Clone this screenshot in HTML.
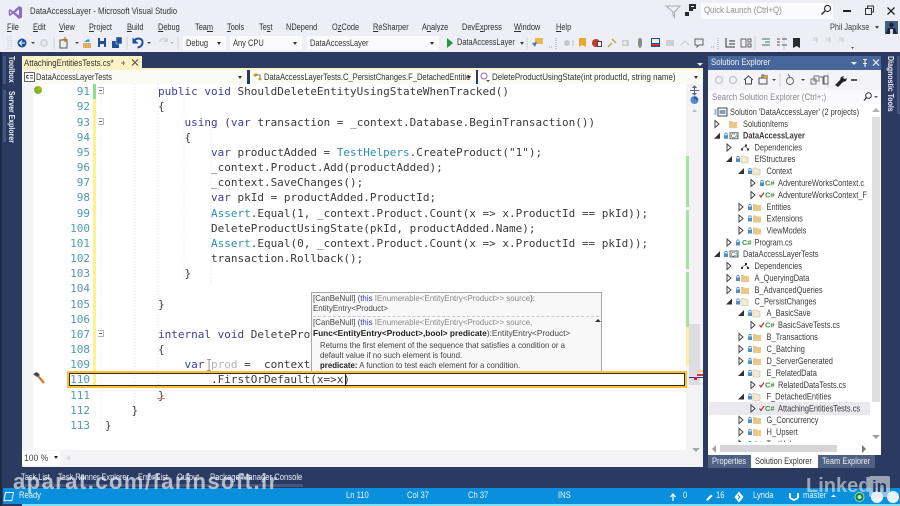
<!DOCTYPE html>
<html><head><meta charset="utf-8"><style>
html,body{margin:0;padding:0;background:#2a3a61}
#p{position:relative;width:900px;height:506px;overflow:hidden;background:#2a3a61;font-family:"Liberation Sans",sans-serif;color:#333;filter:blur(.35px)}
#p div,#p svg{position:absolute}
.x{display:inline-block;transform:scaleX(.83);transform-origin:0 0;white-space:nowrap}
.m{top:22px;font-size:9px;line-height:11px;color:#2e2e33;white-space:nowrap;transform:scaleX(.82);transform-origin:0 0}
.m u{text-decoration:underline}
.cb{background:#fbfbfd;height:14px;top:36px;font-size:9px;line-height:14px;color:#333;padding-left:3px;box-sizing:border-box;white-space:nowrap}
.cb:after,.nb:after{content:"";position:absolute;right:5px;top:6px;border:2.5px solid transparent;border-top:3px solid #333;border-bottom:0}
.nb{background:#fbfbf6;height:14px;top:70px;font-size:9px;line-height:14px;color:#333;box-sizing:border-box;white-space:nowrap;overflow:hidden}
.c{left:105px;font:11px/15px "DejaVu Sans Mono",monospace;color:#3a3a3a;white-space:pre;height:15px}
.c b{font-weight:normal;color:#3e3e9e}
.c i{font-style:normal;color:#2b91af}
.c s{text-decoration:none;color:#b5b5b5}
.n{left:58px;width:32px;text-align:right;font:11px/15px "DejaVu Sans Mono",monospace;color:#4f9bb0;height:15px}
.t text{font:9px "Liberation Sans",sans-serif;fill:#3c3c3c}
.t>text{transform-box:fill-box;transform-origin:0 0;transform:scaleX(.825)}
.tp{line-height:10px;color:#444;white-space:nowrap}
.w{color:#eef1f6;font-size:9px;line-height:11px;white-space:nowrap;transform:scaleX(.82);transform-origin:0 0}
.st{top:490px;color:#eef7fd;font-size:9.5px;line-height:12px;white-space:nowrap;transform:scaleX(.8);transform-origin:0 0}
</style></head><body><div id="p">

<!-- chrome top -->
<div style="left:0;top:0;width:900px;height:52px;background:#eeeff6"></div>
<svg style="left:8px;top:5px" width="15" height="15" viewBox="0 0 15 15"><path d="M11 1l3 1.5v10L11 14 5 8.500 2 11 .8 10V5l1.200-1 3 2.500z" fill="#8a6cc0"/><path d="M11 4.500v6L7 7.500z" fill="#eeeff6"/><path d="M2 6v3l1.500-1.500z" fill="#eeeff6"/></svg>
<div style="left:30px;top:6px;font-size:9.5px;line-height:12px;color:#333;white-space:nowrap;transform:scaleX(.82);transform-origin:0 0">DataAccessLayer - Microsoft Visual Studio</div>
<svg style="left:665px;top:3px" width="22" height="17" viewBox="0 0 22 17"><path d="M1 3h14l-5.500 6v5.500L8 12V9z" fill="none" stroke="#a9a9ae"/></svg>
<svg style="left:684px;top:3px" width="14" height="14" viewBox="0 0 14 14"><path d="M5 1h7v5H9v2H5zM1 9h4v4H1z" fill="#2b2b30"/><path d="M7 3h3v1H7z" fill="#eee"/></svg>
<div style="left:701px;top:3px;width:132px;height:16px;background:#fbfbfe;font-size:9.5px;line-height:16px;color:#8f8f96;padding-left:3px;box-sizing:border-box"><span class="x" style="transform:scaleX(.82)">Quick Launch (Ctrl+Q)</span></div>
<svg style="left:820px;top:4px" width="12" height="12" viewBox="0 0 12 12"><circle cx="7.500" cy="4.500" r="3" fill="none" stroke="#333" stroke-width="1.200"/><path d="M5 7l-3.500 3.500" stroke="#333" stroke-width="1.500"/></svg>
<div style="left:843px;top:10px;width:8px;height:2px;background:#222"></div>
<svg style="left:864px;top:5px" width="11" height="11" viewBox="0 0 11 11"><path d="M3.500 3V1h6v6H7.500M1.500 3.500h6v6h-6z" fill="none" stroke="#333"/></svg>
<svg style="left:886px;top:6px" width="10" height="10" viewBox="0 0 10 10"><path d="M1.500 1.500l7 7M8.500 1.500l-7 7" stroke="#222" stroke-width="1.300"/></svg>

<div class="m" style="left:7px"><u>F</u>ile</div>
<div class="m" style="left:33px"><u>E</u>dit</div>
<div class="m" style="left:59px"><u>V</u>iew</div>
<div class="m" style="left:89px"><u>P</u>roject</div>
<div class="m" style="left:127px"><u>B</u>uild</div>
<div class="m" style="left:158px"><u>D</u>ebug</div>
<div class="m" style="left:195px">Tea<u>m</u></div>
<div class="m" style="left:227px"><u>T</u>ools</div>
<div class="m" style="left:259px">Te<u>s</u>t</div>
<div class="m" style="left:286px">NDepend</div>
<div class="m" style="left:332px">O<u>z</u>Code</div>
<div class="m" style="left:373px"><u>R</u>eSharper</div>
<div class="m" style="left:422px">A<u>n</u>alyze</div>
<div class="m" style="left:462px">DevE<u>x</u>press</div>
<div class="m" style="left:514px"><u>W</u>indow</div>
<div class="m" style="left:556px"><u>H</u>elp</div>
<div class="m" style="left:830px;color:#444">Phil Japikse</div>
<div style="left:875px;top:26px;border:2.5px solid transparent;border-top:3px solid #444;border-bottom:0"></div>
<div style="left:885px;top:21px;width:13px;height:13px;background:#3d5f8a"></div>
<svg style="left:885px;top:21px" width="13" height="13" viewBox="0 0 13 13"><circle cx="6.500" cy="4" r="2.500" fill="#1e2b3c"/><path d="M1 13l2-6h7l2 6z" fill="#1b2430"/><path d="M5 8h3v5H5z" fill="#c9d6e6"/></svg>

<!-- toolbar -->
<svg style="left:0;top:34px" width="630" height="18" viewBox="0 0 630 18">
<path d="M8 2v14M11 2v14" stroke="#c8c8d0" stroke-dasharray="1 1"/>
<circle cx="22" cy="9" r="4.500" fill="#1e4f99"/><path d="M25 9h-5M22 6.500L19.500 9l2.500 2.500" stroke="#fff" fill="none"/>
<path d="M31 8h4l-2 2z" fill="#444"/>
<circle cx="44" cy="9" r="4" fill="#d5d5da"/><circle cx="44" cy="9" r="2" fill="#eeeff6"/>
<path d="M54 3v12" stroke="#cfcfd8"/>
<path d="M60 6h7v8h-7z" fill="#eee" stroke="#555"/><path d="M65 3v5M62.500 5.500h5" stroke="#a9781c" stroke-width="1.200"/>
<path d="M75 8h4l-2 2z" fill="#444"/>
<path d="M83 9h8v5h-8z" fill="#e0b060"/><path d="M84 8l4-3 2 1-1 2z" fill="#39a0d8"/>
<path d="M98 4h8v9h-8z" fill="#1e4f99"/><path d="M100 4h4v3h-4zM100 10h4v3h-4z" fill="#eef"/>
<path d="M112 7h7v7h-7z" fill="#1e4f99"/><path d="M116 3h6v7h-6z" fill="#1e4f99" stroke="#eeeff6" stroke-width=".5"/>
<path d="M127 3v12" stroke="#cfcfd8"/>
<path d="M134 6.500c4-3.500 9-2 8.500 2.500-.3 3-3 4.500-5 4.500" fill="none" stroke="#1e4f99" stroke-width="2"/><path d="M132.500 3.500v6h6z" fill="#1e4f99"/>
<path d="M147 8h4l-2 2z" fill="#444"/>
<path d="M167 6c-3-3-7-1-7 2" fill="none" stroke="#d4d4da" stroke-width="1.600"/><path d="M168 3v5h-5z" fill="#d4d4da"/>
<path d="M170 8h4l-2 2z" fill="#bbb"/>
<path d="M178 3v12" stroke="#cfcfd8"/>
<path d="M447 4l6 5-6 5z" fill="#1f9b3f"/>
<path d="M527 3v13" stroke="#cfcfd8"/>
</svg>
<div class="cb" style="left:183px;width:43px"><span class="x">Debug</span></div>
<div class="cb" style="left:230px;width:72px"><span class="x">Any CPU</span></div>
<div class="cb" style="left:307px;width:132px"><span class="x">DataAccessLayer</span></div>
<div class="m" style="left:457px;top:37px;color:#333">DataAccessLayer</div>
<div style="left:520px;top:42px;border:2.5px solid transparent;border-top:3px solid #444;border-bottom:0"></div>
<svg style="left:530px;top:34px" width="290" height="18" viewBox="530 34 290 18">
<path d="M535 38h8v6h-8z" fill="#e8b84a"/><path d="M532 43l5-1-2 5z" fill="#3f7fbf"/>
<path d="M549 47h3M556 38v11" stroke="#a0a0a8" stroke-dasharray="1 1"/>
<circle cx="567" cy="43" r="3" fill="#c8c8cc"/><path d="M572 40h2v6h-2z" fill="#d8d8dc"/>
<path d="M579 38h7v9l-4-2-3 2z" fill="#e8a830"/>
<circle cx="596" cy="43" r="4" fill="#c0392b"/><path d="M597 41h5v6h-5z" fill="#444"/><path d="M598 42h3v4h-3z" fill="#eee"/>
<path d="M608 47l4-4M612 39l4 4" stroke="#c9a24a" stroke-width="1.500"/>
<path d="M622 40h7v6h-7z" fill="#ccc"/><circle cx="625" cy="43" r="1.800" fill="#eee"/>
<path d="M640 38c-2 0-2 2-2 5s1 5 2 5 2-2 2-5 0-5-2-5z" fill="#888"/>
<path d="M651 38h9v9h-9z" fill="#1e4f99"/><path d="M652 39h7v4h-7z" fill="#eee"/><path d="M652 44h7v2h-7z" fill="#c33"/>
<path d="M666 40h8v6h-8z" fill="#d0d0d4"/>
<path d="M681 45l4-4 4 4" stroke="#ccc" fill="none"/>
<path d="M695 39h8v6h-4l-2 2v-2h-2z" fill="none" stroke="#666"/>
<path d="M711 47h3M718 38v11" stroke="#a0a0a8" stroke-dasharray="1 1"/>
<path d="M726 38v9h9M729 41h6M729 44h6" stroke="#333" fill="none"/>
<path d="M741 39h5v8h-5zM748 39h3v3h-3zM748 44h3v3h-3z" fill="none" stroke="#666"/>
<path d="M755 36v14M784 36v14" stroke="#cfcfd8"/>
<path d="M762 39h8M765 42h5M762 45h8" stroke="#3f7a6a"/>
<path d="M777 39h3M777 42h3M777 45h3M782 39h5M782 45h5" stroke="#555"/>
</svg>
<svg style="left:792px;top:37px" width="9" height="12" viewBox="0 0 9 12"><path d="M1 1h7v10L4.500 9 1 11z" fill="#2a2a2e"/></svg>
<svg style="left:810px;top:36px" width="50" height="14" viewBox="0 0 50 14"><path d="M3 2h4v5M3 4h4M16 2h4v5M16 4h4M29 2h4v5M29 4h4" stroke="#ccc" fill="none"/><path d="M41 11h3l-1.500 2z" fill="#555"/></svg>

<!-- left rail -->
<div style="left:0;top:52px;width:2px;height:454px;background:#1c2a49"></div>
<div class="w" style="left:0;top:56px;transform-origin:0 0;transform:translate(17px,0) rotate(90deg) scaleX(.82);font-weight:bold;font-size:8.5px">Toolbox</div>
<div class="w" style="left:0;top:91px;transform-origin:0 0;transform:translate(17px,0) rotate(90deg) scaleX(.82);font-weight:bold;font-size:8.5px">Server Explorer</div>
<div style="left:3px;top:56px;width:3px;height:28px;background:#44557b"></div>
<div style="left:3px;top:90px;width:3px;height:52px;background:#44557b"></div>

<!-- tab strip -->
<div style="left:22px;top:68px;width:681px;height:2px;background:#fdf1c6"></div>
<div style="left:22px;top:56px;width:120px;height:14px;background:#fdf1c6;font-size:9px;line-height:14px;color:#333;padding-left:2px;box-sizing:border-box;white-space:nowrap"><span class="x" style="transform:scaleX(.87)">AttachingEntitiesTests.cs*</span></div>
<svg style="left:120px;top:58px" width="20" height="10" viewBox="0 0 20 10"><path d="M1 5h4M3.500 3v4" stroke="#7b7b60"/><path d="M12 1.500l6 6M18 1.500l-6 6" stroke="#5a5a40" stroke-width="1.200"/></svg>
<svg style="left:696px;top:60px" width="8" height="6" viewBox="0 0 8 6"><path d="M0 1h8M1 3h6L4 6z" fill="#dfe4ee"/></svg>

<!-- nav bar -->
<div class="nb" style="left:22px;width:225px;padding-left:14px"><span class="x">DataAccessLayerTests</span></div>
<svg style="left:24px;top:72px" width="11" height="10" viewBox="0 0 11 10"><path d="M.5.500h10v9H.5z" fill="#fff" stroke="#666"/><path d="M4.500 3.500c-2-1-3 2.500 0 3" fill="none" stroke="#333"/><path d="M6 3.500h3M6 6h3" stroke="#555"/></svg>
<div class="nb" style="left:250px;width:226px;padding-left:14px"><span class="x" style="transform:scaleX(.84)">DataAccessLayerTests.C_PersistChanges.F_DetachedEntitie</span></div>
<svg style="left:252px;top:72px" width="11" height="10" viewBox="0 0 11 10"><path d="M1 3l3-2 2 2-3 2zM6 7l2-1.500L10 7l-2 1.500z" fill="#d4962f"/><path d="M4 3h4v3" fill="none" stroke="#777"/></svg>
<div class="nb" style="left:478px;width:225px;padding-left:14px"><span class="x" style="transform:scaleX(.88)">DeleteProductUsingState(int productId, string name)</span></div>
<svg style="left:479px;top:72px" width="12" height="10" viewBox="0 0 12 10"><circle cx="5" cy="4" r="3" fill="none" stroke="#8d6bb0"/><path d="M7 8h4l-2 2z" fill="#444"/></svg>

<!-- editor -->
<div style="left:22px;top:84px;width:681px;height:383px;background:#fff"></div>
<div style="left:22px;top:84px;width:11px;height:366px;background:#f4f4f6"></div>
<div style="left:686px;top:84px;width:17px;height:383px;background:#f3f3f6"></div>
<div style="left:22px;top:450px;width:664px;height:17px;background:#f4f4f6"></div>
<div style="left:22px;top:451px;width:38px;height:14px;background:#fff;font-size:9px;line-height:14px;color:#444;padding-left:2px;box-sizing:border-box"><span class="x" style="transform:scaleX(.95)">100 %</span></div>
<div style="left:54px;top:456px;border:2.5px solid transparent;border-top:3px solid #222;border-bottom:0"></div>
<div style="left:66px;top:455px;border:3px solid transparent;border-right:4px solid #dcdce0;border-left:0"></div>
<svg style="left:688px;top:84px" width="15" height="34" viewBox="0 0 15 34"><path d="M6.500 2v9M2 6.500h9M6.500 2l-1.500 1.500h3zM6.500 11L5 9.500h3z" stroke="#5a6b80"/><circle cx="6.500" cy="16" r="4" fill="#4d8ac9"/><path d="M6 14a2.500 2.500 0 0 1 3 2" stroke="#17345c" fill="none"/><path d="M4 28l2.500-3 2.500 3z" fill="#bdbdc4"/></svg>
<div style="left:689px;top:324px;width:11px;height:61px;background:#dcdce2"></div>
<div style="left:686px;top:156px;width:3px;height:51px;background:#a5e2a0"></div>
<div style="left:686px;top:210px;width:3px;height:59px;background:#a5e2a0"></div>
<div style="left:686px;top:272px;width:3px;height:55px;background:#a5e2a0"></div>
<div style="left:686px;top:327px;width:3px;height:39px;background:#fbeea0"></div>
<div style="left:697px;top:370px;width:6px;height:2px;background:#f0d78c"></div>
<div style="left:689px;top:377px;width:14px;height:1px;background:#2c2c9a"></div>
<div style="left:697px;top:374px;width:6px;height:2px;background:#d33"></div>
<div style="left:694px;top:377px;width:3px;height:3px;background:#d22"></div>
<div style="top:448px;border:4px solid transparent;border-top:4px solid #a8a8b0;border-bottom:0;left:692px"></div>

<!-- change margin -->
<div style="left:93px;top:84px;width:3px;height:15px;background:#8de08a"></div>
<div style="left:93px;top:99px;width:3px;height:287px;background:#fdf28e"></div>
<svg style="left:98px;top:84px" width="170" height="350" viewBox="98 84 170 350">
<path d="M101 91v340M135 84v340M158 84v320M184 84v200M211 130v155" stroke="#e4e4e4" stroke-dasharray="1 2" fill="none"/>
<path d="M97.500 87.500h6v6h-6zM97.500 118.500h6v6h-6zM97.500 330.500h6v6h-6z" fill="#fff" stroke="#b5b5b5"/>
<path d="M99 90.500h3M99 121.500h3M99 333.500h3" stroke="#666"/>
</svg>
<svg style="left:32px;top:84px" width="14" height="14" viewBox="0 0 14 14"><circle cx="6" cy="6" r="4" fill="#7ab82e"/><path d="M6 2a4 4 0 0 1 4 4H6z" fill="#d8a520"/></svg>
<svg style="left:32px;top:371px" width="14" height="14" viewBox="0 0 14 14"><path d="M1 3l4-2 3 3-3 2z" fill="#445"/><path d="M6 5l6 7" stroke="#d2732a" stroke-width="2.200"/></svg>

<!-- line numbers -->
<div class="n" style="top:84px">91</div><div class="n" style="top:99px">92</div><div class="n" style="top:114.500px">93</div><div class="n" style="top:129.500px">94</div><div class="n" style="top:144.500px">95</div><div class="n" style="top:160px">96</div><div class="n" style="top:175px">97</div><div class="n" style="top:190px">98</div><div class="n" style="top:205.500px">99</div><div class="n" style="top:220.500px">100</div><div class="n" style="top:235.500px">101</div><div class="n" style="top:251px">102</div><div class="n" style="top:266px">103</div><div class="n" style="top:281px">104</div><div class="n" style="top:296.500px">105</div><div class="n" style="top:311.500px">106</div><div class="n" style="top:326.500px">107</div><div class="n" style="top:342px">108</div><div class="n" style="top:357px">109</div><div class="n" style="top:372px">110</div><div class="n" style="top:387.500px">111</div><div class="n" style="top:402.500px">112</div><div class="n" style="top:417.500px">113</div>

<!-- code -->
<div class="c" style="top:84px">        <b>public void</b> ShouldDeleteEntityUsingStateWhenTracked()</div>
<div class="c" style="top:99px">        {</div>
<div class="c" style="top:114.500px">            <b>using</b> (<b>var</b> transaction = _context.Database.BeginTransaction())</div>
<div class="c" style="top:129.500px">            {</div>
<div class="c" style="top:144.500px">                <b>var</b> productAdded = <i>TestHelpers</i>.CreateProduct("1");</div>
<div class="c" style="top:160px">                _context.Product.Add(productAdded);</div>
<div class="c" style="top:175px">                _context.SaveChanges();</div>
<div class="c" style="top:190px">                <b>var</b> pkId = productAdded.ProductId;</div>
<div class="c" style="top:205.500px">                <i>Assert</i>.Equal(1, _context.Product.Count(x =&gt; x.ProductId == pkId));</div>
<div class="c" style="top:220.500px">                DeleteProductUsingState(pkId, productAdded.Name);</div>
<div class="c" style="top:235.500px">                <i>Assert</i>.Equal(0, _context.Product.Count(x =&gt; x.ProductId == pkId));</div>
<div class="c" style="top:251px">                transaction.Rollback();</div>
<div class="c" style="top:266px">            }</div>
<div class="c" style="top:296.500px">        }</div>
<div class="c" style="top:326.500px">        <b>internal void</b> DeletePro</div>
<div class="c" style="top:342px">        {</div>
<div class="c" style="top:357px">            <b>var</b> <s>prod</s> =  context</div>
<div class="c" style="top:387.500px">        }</div>
<div class="c" style="top:402.500px">    }</div>
<div class="c" style="top:417.500px">}</div>
<svg style="left:206px;top:359px" width="6" height="12" viewBox="0 0 6 12"><path d="M1 .5h4M1 11.500h4M3 .5v11" stroke="#999"/></svg>
<div style="left:157px;top:398px;width:8px;height:1px;background:#d9807a"></div>

<!-- line 110 -->
<div style="left:67px;top:371px;width:620px;height:17px;box-sizing:border-box;border:2px solid #f7bf3c;background:transparent"></div>
<div style="left:69px;top:373px;width:616px;height:13px;box-sizing:border-box;border:1px solid #3b2f12"></div>
<div class="c" style="top:372px">                .FirstOrDefault(x=&gt;x)</div>
<div style="left:344.500px;top:374px;width:1px;height:12px;background:#222"></div>

<!-- tooltip -->
<div style="left:311px;top:292px;width:291px;height:79px;background:#f8f8f8;border:1px solid #a8a8a8;box-sizing:border-box;border-bottom:0"></div>
<div style="left:313px;top:316px;width:286px;height:0;border-top:1px dashed #c8c8c8"></div>
<div class="tp" style="left:313px;top:294px;font-size:7.95px"><span style="color:#444">[CanBeNull]</span> (<span style="color:#3b3bb0">this</span> <span style="color:#888">IEnumerable&lt;EntityEntry&lt;Product&gt;&gt; source</span>):</div>
<div class="tp" style="left:313px;top:304px;font-size:7.95px">EntityEntry&lt;Product&gt;</div>
<div class="tp" style="left:313px;top:318px;font-size:7.95px"><span style="color:#444">[CanBeNull]</span> (<span style="color:#3b3bb0">this</span> <span style="color:#888">IEnumerable&lt;EntityEntry&lt;Product&gt;&gt; source,</span></div>
<div class="tp" style="left:313px;top:328px;font-size:8.3px"><strong style="color:#222">Func&lt;EntityEntry&lt;Product&gt;,bool&gt; predicate</strong>):EntityEntry&lt;Product&gt;</div>
<div class="tp" style="left:320px;top:341px;font-size:7.85px">Returns the first element of the sequence that satisfies a condition or a</div>
<div class="tp" style="left:320px;top:351px;font-size:7.85px">default value if no such element is found.</div>
<div class="tp" style="left:320px;top:361px;font-size:7.85px"><strong style="color:#222">predicate:</strong> A function to test each element for a condition.</div>
<div style="left:595px;top:319px;border:3px solid transparent;border-bottom:3px solid #333;border-top:0"></div>

<!-- solution explorer -->
<div style="left:708px;top:56px;width:173px;height:14px;background:#47679b;color:#f0f3f8;font-size:9.5px;line-height:14px;padding-left:3px;box-sizing:border-box"><span class="x" style="transform:scaleX(.82)">Solution Explorer</span></div>
<svg style="left:850px;top:58px" width="30" height="10" viewBox="0 0 30 10"><path d="M1 4h6L4 7z" fill="#eef"/><path d="M13 1.500h4M15 1.500v4M13 5.500h4M15 5.500v3.500" stroke="#eef" stroke-width="1.100"/><path d="M23 1.500l6 6M29 1.500l-6 6" stroke="#eef" stroke-width="1.200"/></svg>
<div style="left:708px;top:70px;width:173px;height:385px;background:#fff"></div>
<div style="left:708px;top:70px;width:173px;height:20px;background:#f3f3f8"></div>
<svg style="left:708px;top:70px" width="173" height="20" viewBox="708 70 173 20">
<circle cx="719" cy="80" r="3.500" fill="none" stroke="#c8c8cf" stroke-width="1.500"/><circle cx="733" cy="80" r="3.500" fill="none" stroke="#c8c8cf" stroke-width="1.500"/>
<path d="M744 80l4.500-4 4.500 4M745.500 79.500v4.500h6v-4.500" fill="none" stroke="#444"/>
<path d="M759 78h8v6h-8zM762 75h2v3h-2z" fill="none" stroke="#555"/><path d="M764 75h4v3h-4z" fill="#d6a13a"/>
<path d="M772 79h4l-2 2z" fill="#444"/>
<path d="M780 73v14M828 73v14" stroke="#d0d0d8"/>
<circle cx="790" cy="81" r="3.500" fill="none" stroke="#666"/><path d="M788 74l2 3" stroke="#666"/>
<path d="M801 79h4l-2 2z" fill="#444"/>
<path d="M814 76h5v5h-5zM811 79h5v5h-5z" fill="none" stroke="#777"/>
<path d="M824 76h4v8h-4zM820 77h3v7h3" fill="none" stroke="#666"/>
<path d="M835 85l5-5 1-3 3-1-1 2 2 1 2-1-1 3-3 1-5 5z" fill="#222"/>
<path d="M851 80h6" stroke="#222" stroke-width="1.500"/>
</svg>
<div style="left:708px;top:90px;width:173px;height:14px;background:#fafafd;font-size:9px;line-height:14px;color:#8a8a92;padding-left:4px;box-sizing:border-box;white-space:nowrap"><span class="x" style="transform:scaleX(.88)">Search Solution Explorer (Ctrl+;)</span></div>
<svg style="left:862px;top:91px" width="18" height="12" viewBox="0 0 18 12"><circle cx="6.500" cy="4.500" r="2.800" fill="none" stroke="#333"/><path d="M4.500 6.500L2 9.500" stroke="#333" stroke-width="1.300"/><path d="M12 5h4l-2 2z" fill="#555"/></svg>
<div style="left:709px;top:402px;width:161px;height:13px;background:#e9e9ef"></div>
<div style="left:872px;top:117px;width:8px;height:285px;background:#dededf"></div>
<div style="left:872px;top:108px;border:4px solid transparent;border-bottom:4px solid #b0b0b8;border-top:0"></div>
<div style="left:872px;top:435px;border:4px solid transparent;border-top:4px solid #a0a0a8;border-bottom:0"></div>
<div style="left:708px;top:442px;width:173px;height:13px;background:#fff"></div>
<div style="left:720px;top:445px;width:117px;height:7px;background:#d6d6d9"></div>
<div style="left:712px;top:445px;border:4px solid transparent;border-right:4px solid #a0a0a8;border-left:0"></div>
<div style="left:862px;top:445px;border:4px solid transparent;border-left:4px solid #777;border-right:0"></div>

<svg class="t" style="left:708px;top:105px" width="164" height="337" viewBox="708 105 164 337">
<defs>
<g id="f"><path d="M-4-3h3l1 1h4v6h-8z" fill="#e8c98a"/></g>
<g id="o"><path d="M-4-3h3l1 1h3v6h-7z" fill="#f2ead2" stroke="#cdb988" stroke-width=".6"/></g>
<g id="l"><path d="M-2-.5h4v3.500h-4z" fill="#4f8fc6"/><path d="M-1.200-.5v-1a1.200 1.200 0 0 1 2.400 0v1" fill="none" stroke="#4f8fc6" stroke-width=".8"/></g>
<g id="k"><path d="M-2.500 0l1.500 2 3-4.500" fill="none" stroke="#c22d2d" stroke-width="1.200"/></g>
<g id="a"><path d="M-2-3.500l4 3.500-4 3.500z" fill="#fff" stroke="#444"/></g>
<g id="e"><path d="M3-3v6h-6z" fill="#333"/></g>
<g id="c"><path d="M-4-3h8v6h-8z" fill="#fff" stroke="#667"/><text x="-3.200" y="2.300" style="font-size:6px;fill:#2a6a3a">C#</text></g>
<g id="s"><text x="-4" y="2.500" style="font-size:7.500px;font-weight:bold;fill:#3f8f45">C#</text></g>
<g id="d"><path d="M-4 1h2v2h-2zM0-3h2v2H0zM2 1h2v2H2z" fill="#333"/><path d="M-3 1l3-2 3 2" stroke="#555" fill="none" stroke-width=".6"/></g>
</defs>
<path d="M714.500 109h2v6h-2z" fill="#8fb7d9"/><path d="M718 108h9v8h-9z" fill="#fff" stroke="#444"/><path d="M719.500 113h6M719.500 111h6" stroke="#1e2f6b"/>
<text x="730" y="115">Solution 'DataAccessLayer' (2 projects)</text>
<use href="#a" x="717" y="124"/><use href="#f" x="733" y="124"/><text x="743" y="127">SolutionItems</text>
<use href="#e" x="717" y="135.700"/><use href="#l" x="726" y="135.700"/><use href="#c" x="734" y="135.700"/><text x="743" y="138.700" style="font-weight:bold">DataAccessLayer</text>
<use href="#a" x="729" y="147.500"/><use href="#d" x="745" y="147.500"/><text x="754.500" y="150.500">Dependencies</text>
<use href="#e" x="729" y="159"/><use href="#l" x="738" y="159"/><use href="#o" x="745" y="159"/><text x="754.500" y="162">EfStructures</text>
<use href="#e" x="741" y="171"/><use href="#l" x="750" y="171"/><use href="#o" x="757" y="171"/><text x="766.500" y="174">Context</text>
<use href="#a" x="753" y="183"/><use href="#l" x="762" y="183"/><use href="#s" x="769" y="183"/><text x="778" y="186">AdventureWorksContext.c</text>
<use href="#a" x="753" y="195"/><use href="#k" x="762" y="195"/><use href="#s" x="769" y="195"/><text x="778" y="198">AdventureWorksContext_F</text>
<use href="#a" x="741" y="207"/><use href="#l" x="750" y="207"/><use href="#f" x="757" y="207"/><text x="766.500" y="210">Entities</text>
<use href="#a" x="741" y="218.500"/><use href="#l" x="750" y="218.500"/><use href="#f" x="757" y="218.500"/><text x="766.500" y="221.500">Extensions</text>
<use href="#a" x="741" y="230.500"/><use href="#l" x="750" y="230.500"/><use href="#f" x="757" y="230.500"/><text x="766.500" y="233.500">ViewModels</text>
<use href="#a" x="729" y="242.500"/><use href="#l" x="738" y="242.500"/><use href="#s" x="746" y="242.500"/><text x="754.500" y="245.500">Program.cs</text>
<use href="#e" x="717" y="254"/><use href="#l" x="726" y="254"/><use href="#c" x="734" y="254"/><text x="743" y="257">DataAccessLayerTests</text>
<use href="#a" x="729" y="266"/><use href="#d" x="745" y="266"/><text x="754.500" y="269">Dependencies</text>
<use href="#a" x="729" y="278"/><use href="#l" x="738" y="278"/><use href="#f" x="745" y="278"/><text x="754.500" y="281">A_QueryingData</text>
<use href="#a" x="729" y="290"/><use href="#l" x="738" y="290"/><use href="#f" x="745" y="290"/><text x="754.500" y="293">B_AdvancedQueries</text>
<use href="#e" x="729" y="301.500"/><use href="#l" x="738" y="301.500"/><use href="#o" x="745" y="301.500"/><text x="754.500" y="304.500">C_PersistChanges</text>
<use href="#e" x="741" y="313"/><use href="#l" x="750" y="313"/><use href="#o" x="757" y="313"/><text x="766.500" y="316">A_BasicSave</text>
<use href="#a" x="753" y="325"/><use href="#k" x="762" y="325"/><use href="#s" x="769" y="325"/><text x="778" y="328">BasicSaveTests.cs</text>
<use href="#a" x="741" y="337"/><use href="#l" x="750" y="337"/><use href="#f" x="757" y="337"/><text x="766.500" y="340">B_Transactions</text>
<use href="#a" x="741" y="349"/><use href="#l" x="750" y="349"/><use href="#f" x="757" y="349"/><text x="766.500" y="352">C_Batching</text>
<use href="#a" x="741" y="361"/><use href="#l" x="750" y="361"/><use href="#f" x="757" y="361"/><text x="766.500" y="364">D_ServerGenerated</text>
<use href="#e" x="741" y="373"/><use href="#l" x="750" y="373"/><use href="#o" x="757" y="373"/><text x="766.500" y="376">E_RelatedData</text>
<use href="#a" x="753" y="385"/><use href="#k" x="762" y="385"/><use href="#s" x="769" y="385"/><text x="778" y="388">RelatedDataTests.cs</text>
<use href="#e" x="741" y="396.500"/><use href="#l" x="750" y="396.500"/><use href="#o" x="757" y="396.500"/><text x="766.500" y="399.500">F_DetachedEntities</text>
<use href="#a" x="753" y="408.500"/><use href="#k" x="762" y="408.500"/><use href="#s" x="769" y="408.500"/><text x="778" y="411.500">AttachingEntitiesTests.cs</text>
<use href="#a" x="741" y="420"/><use href="#l" x="750" y="420"/><use href="#f" x="757" y="420"/><text x="766.500" y="423">G_Concurrency</text>
<use href="#a" x="741" y="432"/><use href="#l" x="750" y="432"/><use href="#f" x="757" y="432"/><text x="766.500" y="435">H_Upsert</text>
<use href="#a" x="741" y="444"/><use href="#l" x="750" y="444"/><use href="#s" x="757" y="444"/><text x="766.500" y="447">TestHelpers.cs</text>
</svg>

<!-- SE tabs -->
<div style="left:708px;top:455px;width:43px;height:13px;background:#4e6185;color:#eef1f6;font-size:9px;line-height:13px;padding-left:4px;box-sizing:border-box"><span class="x">Properties</span></div>
<div style="left:751px;top:454px;width:67px;height:14px;background:#fff;color:#333;font-size:9px;line-height:14px;padding-left:4px;box-sizing:border-box;white-space:nowrap"><span class="x">Solution Explorer</span></div>
<div style="left:818px;top:455px;width:57px;height:13px;background:#4e6185;color:#eef1f6;font-size:9px;line-height:13px;padding-left:4px;box-sizing:border-box;white-space:nowrap"><span class="x">Team Explorer</span></div>

<!-- diagnostic tools -->
<div class="w" style="left:0;top:56px;transform-origin:0 0;transform:translate(896px,0) rotate(90deg) scaleX(.82);font-weight:bold;font-size:8.5px">Diagnostic Tools</div>
<div style="left:897px;top:56px;width:3px;height:58px;background:#44557b"></div>

<!-- bottom tool tabs -->
<div class="w" style="left:21px;top:472px">Task List</div>
<div class="w" style="left:58px;top:472px">Task Runner Explorer</div>
<div class="w" style="left:138px;top:472px">Error List</div>
<div class="w" style="left:177px;top:472px">Output</div>
<div class="w" style="left:210px;top:472px;transform:scaleX(.85)">Package Manager Console</div>
<div style="left:21px;top:484px;width:282px;height:3px;background:#46567c"></div>

<!-- status bar -->
<div style="left:3px;top:488px;width:897px;height:16px;background:#0a8fdc"></div>
<div style="left:22px;top:504px;width:878px;height:2px;background:#7fdcf2"></div>
<svg style="left:3px;top:491px" width="12" height="11" viewBox="0 0 12 11"><path d="M2.500 1.500h8l-1.500 8h-8z" fill="none" stroke="#eaf5fc"/></svg>
<div class="st" style="left:19px">Ready</div>
<div class="st" style="left:346px">Ln 110</div>
<div class="st" style="left:407px">Col 37</div>
<div class="st" style="left:468px">Ch 37</div>
<div class="st" style="left:558px">INS</div>
<svg style="left:670px;top:490px" width="230" height="14" viewBox="670 490 230 14">
<path d="M673 501v-7M670.500 497l2.500-3 2.500 3" fill="none" stroke="#fff" stroke-width="1.300"/>
<path d="M706 501l1-2.500 4-4 1.500 1.500-4 4z" fill="#fff"/>
<path d="M739 491.500l4.500 5.500-4.500 5.500-4.500-5.500z" fill="#fff"/><path d="M738 495l2 2-2 2" stroke="#0a8fdc" fill="none"/>
<path d="M790 493v5M798 493v5M790 498l4 2 4-2" fill="none" stroke="#fff" stroke-width="1.800"/>
<path d="M831 497l2.500-2.500 2.500 2.500z" fill="#fff"/>
<circle cx="859.500" cy="497" r="4.500" fill="#1a7a3e" stroke="#9be0a8"/><circle cx="859.500" cy="497" r="2" fill="#b6f0c0"/>
<circle cx="877" cy="497" r="6" fill="#eaf3f8"/><circle cx="893" cy="497" r="6" fill="#eaf3f8"/>
</svg>
<div class="st" style="left:683px">0</div>
<div class="st" style="left:716px">16</div>
<div class="st" style="left:753px">Lynda</div>
<div class="st" style="left:803px">master</div>

<!-- watermarks -->
<div style="left:13px;top:470px;color:rgba(226,233,245,.72);font-size:22px;line-height:24px;font-weight:bold;white-space:nowrap;letter-spacing:1.45px">aparat.com/farinsoft.ir</div>
<div style="left:806px;top:474px;color:rgba(226,233,240,.6);font-size:20px;line-height:24px;font-weight:bold;white-space:nowrap">Linked</div>
<div style="left:869px;top:476px;width:21px;height:21px;background:rgba(226,233,240,.6);border-radius:2px;color:#2a3a61;font-size:17px;line-height:22px;font-weight:bold;text-align:center">in</div>
</div></body></html>
